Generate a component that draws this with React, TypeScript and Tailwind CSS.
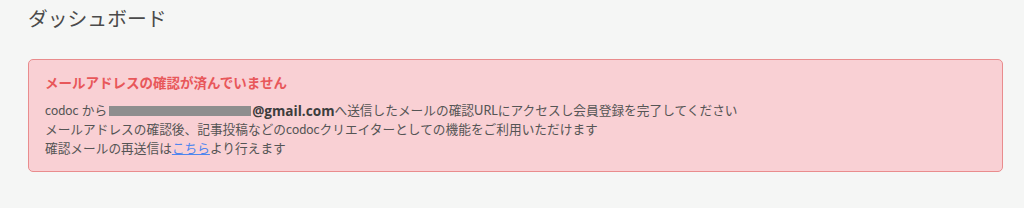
import React from "react";

export default function App() {
  return (
    <div
      className="min-h-[208px] w-full bg-[#f5f6f5] pl-[28px] pr-[21px] pt-[4px]"
      style={{ fontFamily: '"Lato", "Noto Sans CJK JP", sans-serif' }}
    >
      <h1 className="text-[19.8px] leading-[28px] font-normal text-[#4a4a4a]">
        ダッシュボード
      </h1>
      <div className="mt-[27px] rounded-[5px] border border-[#e98c8d] bg-[#f9d0d4] pl-[16px] pr-4 pt-[13px] pb-[13px]">
        <p className="text-[13.5px] leading-[20px] font-bold text-[#e8575a]">
          メールアドレスの確認が済んでいません
        </p>
        <div className="mt-[8px] text-[12.7px] leading-[19px] text-[#555555]">
          <p className="flex items-center">
            <span>codoc から</span>
            <span className="ml-[2px] inline-block h-[10px] w-[142px] bg-[#8e8e8e]" />
            <span
              className="ml-[1px] text-[13.6px] font-bold text-[#3d3d3d]"
              style={{ fontFamily: '"Open Sans", "Noto Sans CJK JP", sans-serif' }}
            >
              @gmail.com
            </span>
            <span>へ送信したメールの確認URLにアクセスし会員登録を完了してください</span>
          </p>
          <p>メールアドレスの確認後、記事投稿などのcodocクリエイターとしての機能をご利用いただけます</p>
          <p>
            確認メールの再送信は
            <a href="#" className="text-[#4f86ee] underline">
              こちら
            </a>
            より行えます
          </p>
        </div>
      </div>
    </div>
  );
}
